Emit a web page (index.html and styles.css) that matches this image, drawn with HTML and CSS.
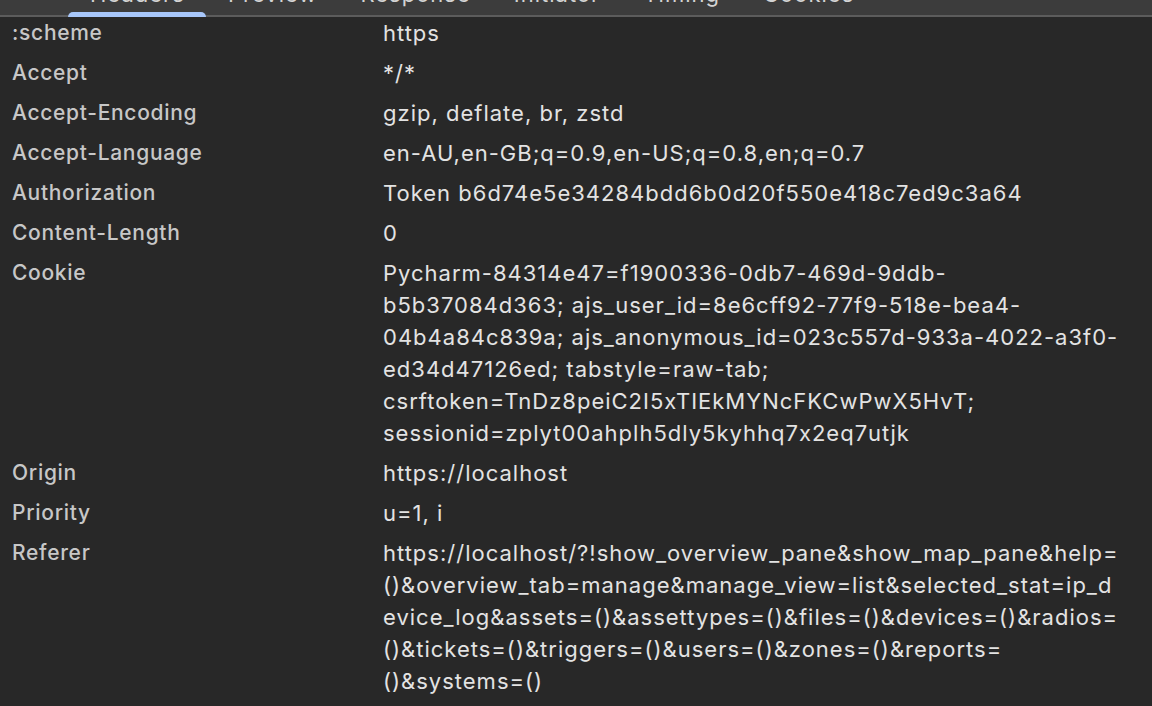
FILE: index.html
```html
<!DOCTYPE html>
<html>
<head>
<meta charset="utf-8">
<link rel="stylesheet" href="styles.css">
</head>
<body>
<div class="tabs">
  <div class="tab active">Headers</div>
  <div class="tab">Preview</div>
  <div class="tab">Response</div>
  <div class="tab">Initiator</div>
  <div class="tab">Timing</div>
  <div class="tab">Cookies</div>
</div>
<div class="headers">
  <div class="row"><div class="name">:scheme</div><div class="value">https</div></div>
  <div class="row"><div class="name">Accept</div><div class="value">*/*</div></div>
  <div class="row"><div class="name">Accept-Encoding</div><div class="value">gzip, deflate, br, zstd</div></div>
  <div class="row"><div class="name">Accept-Language</div><div class="value">en-AU,en-GB;q=0.9,en-US;q=0.8,en;q=0.7</div></div>
  <div class="row"><div class="name">Authorization</div><div class="value">Token b6d74e5e34284bdd6b0d20f550e418c7ed9c3a64</div></div>
  <div class="row"><div class="name">Content-Length</div><div class="value">0</div></div>
  <div class="row"><div class="name">Cookie</div><div class="value">Pycharm-84314e47=f1900336-0db7-469d-9ddb-b5b37084d363; ajs_user_id=8e6cff92-77f9-518e-bea4-04b4a84c839a; ajs_anonymous_id=023c557d-933a-4022-a3f0-ed34d47126ed; tabstyle=raw-tab; csrftoken=TnDz8peiC2I5xTIEkMYNcFKCwPwX5HvT; sessionid=zplyt00ahplh5dly5kyhhq7x2eq7utjk</div></div>
  <div class="row"><div class="name">Origin</div><div class="value">https://localhost</div></div>
  <div class="row"><div class="name">Priority</div><div class="value">u=1, i</div></div>
  <div class="row"><div class="name">Referer</div><div class="value">https://localhost/?!show_overview_pane&amp;show_map_pane&amp;help=()&amp;overview_tab=manage&amp;manage_view=list&amp;selected_stat=ip_device_log&amp;assets=()&amp;assettypes=()&amp;files=()&amp;devices=()&amp;radios=()&amp;tickets=()&amp;triggers=()&amp;users=()&amp;zones=()&amp;reports=()&amp;systems=()</div></div>
</div>
</body>
</html>
```
FILE: styles.css
```css
html, body {
  margin: 0;
  padding: 0;
  background: #282828;
  overflow: hidden;
}
body {
  font-family: Inter, "Noto Sans", sans-serif;
  font-size: 21px;
  color: #e3e3e3;
}
.tabs {
  display: flex;
  height: 40px;
  margin-top: -23px;
  background: #3c3c3c;
  border-bottom: 2px solid #5c5c5c;
  padding-left: 68px;
  box-sizing: border-box;
}
.tab {
  position: relative;
  padding: 0 21px 0 22px;
  line-height: 34px;
  font-size: 22px;
  color: #d4d4d4;
  letter-spacing: 1px;
}
.tab.active::after {
  content: "";
  position: absolute;
  left: 0;
  right: 0;
  bottom: -2px;
  height: 5px;
  background: #a8c7fa;
  border-radius: 5px 5px 0 0;
}
.headers {
  margin-top: -4px;
}
.row {
  display: grid;
  grid-template-columns: 383px 1fr;
  padding: 4px 26px 4px 0;
  line-height: 32px;
}
.name {
  padding-left: 12px;
  color: #c7c7c7;
  font-weight: 500;
  letter-spacing: 0.7px;
}
.value {
  color: #e3e3e3;
  font-size: 22px;
  letter-spacing: 1px;
  overflow-wrap: anywhere;
}
```
